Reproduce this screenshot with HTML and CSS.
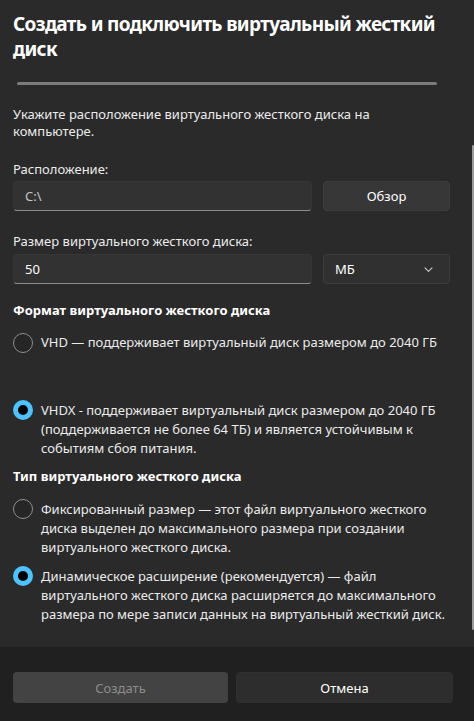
FILE: index.html
```html
<!DOCTYPE html>
<html lang="ru">
<head>
<meta charset="utf-8">
<link rel="stylesheet" href="styles.css">
</head>
<body>
<div class="dialog">
  <div class="content">
    <h1 class="title">Создать и подключить виртуальный жесткий<br>диск</h1>
    <div class="divider"></div>
    <p class="desc">Укажите расположение виртуального жесткого диска на<br>компьютере.</p>
    <div class="label label-first">Расположение:</div>
    <div class="row">
      <div class="input"><span class="placeholder">C:\</span></div>
      <div class="btn-side">Обзор</div>
    </div>
    <div class="label">Размер виртуального жесткого диска:</div>
    <div class="row row-size">
      <div class="input"><span class="value">50</span></div>
      <div class="select">
        <span>МБ</span>
        <svg class="chev" width="9" height="5" viewBox="0 0 9 5"><path d="M1 0.8l3.5 3.5 3.5-3.5" fill="none" stroke="#c8c8c8" stroke-width="1.1" stroke-linecap="round" stroke-linejoin="round"/></svg>
      </div>
    </div>
    <div class="heading h-format">Формат виртуального жесткого диска</div>
    <div class="radio r-vhd"><span class="dot"></span><span class="rtext">VHD — поддерживает виртуальный диск размером до 2040 ГБ</span></div>
    <div class="radio r-vhdx"><span class="dot on"></span><span class="rtext">VHDX - поддерживает виртуальный диск размером до 2040 ГБ<br>(поддерживается не более 64 ТБ) и является устойчивым к<br>событиям сбоя питания.</span></div>
    <div class="heading h-type">Тип виртуального жесткого диска</div>
    <div class="radio r-fixed"><span class="dot"></span><span class="rtext">Фиксированный размер — этот файл виртуального жесткого<br>диска выделен до максимального размера при создании<br>виртуального жесткого диска.</span></div>
    <div class="radio r-dyn"><span class="dot on"></span><span class="rtext">Динамическое расширение (рекомендуется) — файл<br>виртуального жесткого диска расширяется до максимального<br>размера по мере записи данных на виртуальный жесткий диск.</span></div>
    <div class="vscroll"></div>
  </div>
  <div class="footer">
    <div class="btn btn-disabled">Создать</div>
    <div class="btn btn-cancel">Отмена</div>
  </div>
</div>
</body>
</html>
```

FILE: styles.css
```css
* { box-sizing: border-box; }
html, body { margin: 0; padding: 0; }
body {
  background: #2a2a2a;
  font-family: "Noto Sans", "Open Sans", sans-serif;
  color: #ececec;
  width: 474px;
  height: 721px;
  overflow: hidden;
}
.dialog {
  display: flex;
  flex-direction: column;
  height: 721px;
}
.content {
  flex: 1;
  position: relative;
  padding: 12px 13px 0 13px;
}
.title {
  margin: 0;
  font-size: 19px;
  line-height: 25px;
  font-weight: 700;
  color: #ffffff;
  letter-spacing: -0.65px;
  white-space: nowrap;
}
.divider {
  margin: 20px 24px 0 4px;
  height: 3px;
  border-radius: 2px;
  background: #7b7b7b;
}
.desc {
  margin: 21px 0 0 0;
  font-size: 13px;
  line-height: 17px;
  white-space: nowrap;
}
.label {
  margin-top: 21px;
  font-size: 13px;
  line-height: 18px;
}
.label-first { margin-top: 20px; }
.row {
  display: flex;
  gap: 11px;
  margin-top: 3px;
  height: 30px;
  padding-right: 11px;
}
.row-size { margin-top: 4px; }
.input {
  width: 299px;
  height: 30px;
  background: #323232;
  border: 1px solid #363636;
  border-bottom: 1px solid #8c8c8c;
  border-radius: 4px;
  display: flex;
  align-items: center;
  padding-left: 11px;
  font-size: 13px;
}
.placeholder { color: #c4c4c4; }
.value { color: #ffffff; }
.btn-side, .select {
  flex: 1;
  height: 30px;
  background: #373737;
  border: 1px solid #3c3c3c;
  border-radius: 4px;
  display: flex;
  align-items: center;
  font-size: 13px;
  color: #ffffff;
}
.btn-side { justify-content: center; }
.select {
  justify-content: space-between;
  padding: 0 16px 0 11px;
  background: #303030;
}
.heading {
  font-size: 13px;
  line-height: 20px;
  font-weight: 700;
  color: #ffffff;
}
.h-format { margin-top: 16px; }
.h-type { margin-top: 8px; }
.radio {
  display: flex;
  gap: 8px;
  font-size: 13px;
  line-height: 19px;
}
.r-vhd { margin-top: 13px; }
.r-vhdx { margin-top: 48px; }
.r-fixed { margin-top: 14px; }
.r-dyn { margin-top: 10px; }
.dot {
  flex: none;
  width: 20px;
  height: 20px;
  border-radius: 50%;
  border: 1px solid #8f8f8f;
  background: #262626;
  margin-top: -0.5px;
}
.dot.on {
  border: 5px solid #4cc2ff;
  background: #000000;
}
.rtext { color: #ebebeb; white-space: nowrap; }
.vscroll {
  position: absolute;
  right: 0;
  top: 145px;
  width: 2px;
  height: 485px;
  background: #9a9a9a;
  border-radius: 1px;
}
.footer {
  flex: none;
  height: 74px;
  background: #202020;
  display: flex;
  gap: 8px;
  padding: 25px 21px 18px 13px;
}
.btn {
  flex: 1;
  height: 31px;
  border-radius: 4px;
  display: flex;
  align-items: center;
  justify-content: center;
  font-size: 13px;
}
.btn-disabled { background: #434343; color: #8d8d8d; }
.btn-cancel { background: #2d2d2d; color: #ffffff; border: 1px solid #303030; }
```
